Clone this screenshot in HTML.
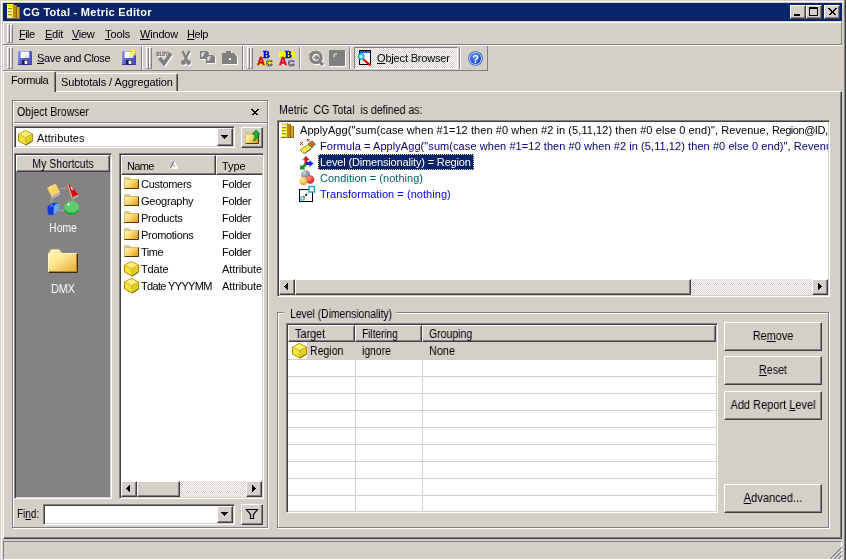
<!DOCTYPE html>
<html>
<head>
<meta charset="utf-8">
<title>CG Total - Metric Editor</title>
<style>
html,body{margin:0;padding:0;}
body{width:846px;height:560px;overflow:hidden;background:#d4d0c8;font-family:"Liberation Sans",sans-serif;font-size:11px;color:#000;position:relative;}
.a{position:absolute;white-space:nowrap;}
.t{position:absolute;white-space:nowrap;line-height:13px;height:13px;will-change:transform;}
u{text-decoration:underline;text-decoration-thickness:1px;text-underline-offset:1px;}
.btn{border:1px solid;border-color:#fff #404040 #404040 #fff;box-shadow:inset -1px -1px 0 #808080;background:#d4d0c8;box-sizing:border-box;}
.sunken{border:1px solid;border-color:#808080 #fff #fff #808080;box-shadow:inset 1px 1px 0 #404040, inset -1px -1px 0 #d4d0c8;background:#fff;box-sizing:border-box;}
.hdr{background:#d4d0c8;border:1px solid;border-color:#fff #404040 #404040 #fff;box-shadow:inset -1px -1px 0 #808080;box-sizing:border-box;}
.bar{width:3px;box-sizing:border-box;border-left:1px solid #fff;border-right:1px solid #808080;border-top:1px solid #fff;border-bottom:1px solid #808080;background:#d4d0c8;}
.sb{background-color:#e9e7e3;background-image:conic-gradient(#fff 25%,#d4d0c8 0 50%,#fff 0 75%,#d4d0c8 0);background-size:2px 2px;}
.etchv{width:0;border-left:1px solid #808080;border-right:1px solid #fff;}
.etchh{height:0;border-top:1px solid #808080;border-bottom:1px solid #fff;}
.etchbox{box-sizing:border-box;border:1px solid #808080;box-shadow:1px 1px 0 #fff, inset 1px 1px 0 #fff;}
svg{overflow:visible;will-change:transform;}
</style>
</head>
<body>
<div class="a " style="left:1px;top:1px;width:844px;height:559px;border-left:1px solid #fff;border-top:1px solid #fff;box-sizing:border-box;"></div>
<div class="a " style="left:844px;top:0px;width:1px;height:560px;background:#808080;"></div>
<div class="a " style="left:845px;top:0px;width:1px;height:560px;background:#404040;"></div>
<div class="a " style="left:3px;top:3px;width:839px;height:18px;background:#0a246a;"></div>
<svg class="a" style="left:7px;top:4px" width="14" height="16" viewBox="0 0 14 16" ><rect x="7" y="1" width="3" height="14" fill="#c08a00"/><rect x="10" y="3" width="2" height="12" fill="#d9a520"/><rect x="12" y="3" width="1" height="12" fill="#8a6a10"/>
<rect x="9" y="1" width="1" height="14" fill="#8a6400"/>
<rect x="0" y="0" width="7" height="15" fill="#ece23c"/><rect x="0" y="0" width="1" height="15" fill="#f8f4a0"/><rect x="6" y="0" width="1" height="15" fill="#a89a20"/>
<rect x="0" y="14" width="13" height="1" fill="#807830"/>
<rect x="1" y="3" width="4" height="1" fill="#fffbc8"/><rect x="1" y="6" width="3" height="1" fill="#fffbc8"/><rect x="1" y="9" width="4" height="1" fill="#fffbc8"/><rect x="1" y="12" width="3" height="1" fill="#fffbc8"/>
<rect x="1" y="4" width="4" height="1" fill="#a09020"/><rect x="1" y="7" width="3" height="1" fill="#a09020"/><rect x="1" y="10" width="4" height="1" fill="#a09020"/></svg>
<div class="t" id="t_title" style="left:23px;top:6px;letter-spacing:0.28px;color:#fff;font-weight:bold;">CG Total - Metric Editor</div>
<div class="a btn" style="left:790px;top:5px;width:16px;height:14px;"></div>
<div class="a btn" style="left:806px;top:5px;width:16px;height:14px;"></div>
<div class="a btn" style="left:824px;top:5px;width:16px;height:14px;"></div>
<div class="a " style="left:794px;top:14px;width:6px;height:2px;background:#000;"></div>
<div class="a " style="left:809px;top:7px;width:9px;height:9px;box-sizing:border-box;border:1px solid #000;border-top-width:2px;"></div>
<svg class="a" style="left:824px;top:5px" width="16" height="14" viewBox="0 0 16 14" ><path d="M4.5 3.5 L11.5 10.5 M5.5 3.5 L12.5 10.5 M11.5 3.5 L4.5 10.5 M12.5 3.5 L5.5 10.5" stroke="#000" stroke-width="1" fill="none" shape-rendering="crispEdges"/></svg>
<div class="a " style="left:3px;top:22px;width:839px;height:1px;background:#fff;"></div>
<div class="a " style="left:3px;top:22px;width:1px;height:23px;background:#fff;"></div>
<div class="a " style="left:841px;top:22px;width:1px;height:23px;background:#808080;"></div>
<div class="a etchh" style="left:3px;top:44px;width:839px;"></div>
<div class="a bar" style="left:7px;top:24px;height:19px;"></div>
<div class="a bar" style="left:10px;top:24px;height:19px;"></div>
<div class="t" id="t_m0" style="left:19px;top:28px;letter-spacing:-0.57px;"><u>F</u>ile</div>
<div class="t" id="t_m1" style="left:45px;top:28px;letter-spacing:-0.25px;"><u>E</u>dit</div>
<div class="t" id="t_m2" style="left:72px;top:28px;letter-spacing:-0.3px;"><u>V</u>iew</div>
<div class="t" id="t_m3" style="left:105px;top:28px;letter-spacing:-0.09px;"><u>T</u>ools</div>
<div class="t" id="t_m4" style="left:140px;top:28px;letter-spacing:-0.18px;"><u>W</u>indow</div>
<div class="t" id="t_m5" style="left:187px;top:28px;letter-spacing:-0.4px;"><u>H</u>elp</div>
<div class="a " style="left:3px;top:46px;width:1px;height:24px;background:#fff;"></div>
<div class="a " style="left:3px;top:70px;width:485px;height:1px;background:#808080;"></div>
<div class="a " style="left:487px;top:46px;width:1px;height:25px;background:#808080;"></div>
<div class="a bar" style="left:7px;top:47px;height:22px;"></div>
<div class="a bar" style="left:10px;top:47px;height:22px;"></div>
<svg class="a" style="left:18px;top:51px" width="14" height="14" viewBox="0 0 14 14" ><defs><linearGradient id="g1" x1="0" y1="0" x2="1" y2="0.3"><stop offset="0" stop-color="#9a98f4"/><stop offset="0.35" stop-color="#6a68e0"/><stop offset="1" stop-color="#4a4ac4"/></linearGradient></defs>
<path d="M0 0 H13 L14 1 V14 H0 Z" fill="url(#g1)"/>
<rect x="0" y="13" width="14" height="1" fill="#3a38a8"/>
<rect x="2.6" y="0.5" width="8.6" height="6.5" fill="#fafbff"/><rect x="7" y="4.5" width="4.2" height="2.5" fill="#dcdcf8"/>
<rect x="4" y="9" width="6" height="4.5" fill="#202048"/><rect x="6.6" y="9.6" width="2.8" height="3.4" fill="#f0f0fc"/></svg>
<div class="t" id="t_save" style="left:37px;top:52px;letter-spacing:-0.31px;"><u>S</u>ave and Close</div>
<svg class="a" style="left:122px;top:49px" width="16" height="16" viewBox="0 0 16 16" ><g transform="translate(0,2)"><defs><linearGradient id="g2" x1="0" y1="0" x2="1" y2="0.3"><stop offset="0" stop-color="#9a98f4"/><stop offset="0.35" stop-color="#6a68e0"/><stop offset="1" stop-color="#4a4ac4"/></linearGradient></defs>
<path d="M0 0 H13 L14 1 V13 H0 Z" fill="url(#g2)"/>
<rect x="0" y="13" width="14" height="1" fill="#3a38a8"/>
<rect x="2.6" y="0.5" width="8.6" height="6.5" fill="#fafbff"/><rect x="7" y="4.5" width="4.2" height="2.5" fill="#dcdcf8"/>
<rect x="4" y="9" width="6" height="4.5" fill="#202048"/><rect x="6.6" y="9.6" width="2.8" height="3.4" fill="#f0f0fc"/></g><g stroke="#ffe838" stroke-width="1.2"><path d="M11.5 0 V7 M8 3.5 H15 M9 1 L14 6 M14 1 L9 6"/></g><rect x="10.5" y="2.5" width="2" height="2" fill="#fffbd0"/></svg>
<div class="a etchv" style="left:141px;top:46px;height:24px;"></div>
<div class="a bar" style="left:146px;top:47px;height:22px;"></div>
<div class="a bar" style="left:149px;top:47px;height:22px;"></div>
<svg class="a" style="left:156px;top:51px" width="17" height="16" viewBox="0 0 17 16" ><g transform="translate(1,1)" fill="#fff" stroke="#fff"><path d="M3.5 7 L8 12.5 L15 2.5" fill="none" stroke-width="3.6"/><text x="0" y="4.5" font-family="Liberation Sans,sans-serif" font-size="7" font-weight="bold" stroke-width="0.4" letter-spacing="-0.3">sum</text></g><g fill="#808080" stroke="#808080"><path d="M3.5 7 L8 12.5 L15 2.5" fill="none" stroke-width="3.6"/><text x="0" y="4.5" font-family="Liberation Sans,sans-serif" font-size="7" font-weight="bold" stroke-width="0.4" letter-spacing="-0.3">sum</text></g></svg>
<svg class="a" style="left:181px;top:51px" width="11" height="15" viewBox="0 0 11 15" ><g transform="translate(1,1)" fill="#fff" stroke="#fff"><path d="M1.5 0 L6.5 10 M8.5 0 L3.5 10" fill="none" stroke-width="2.4"/><circle cx="2.5" cy="11.5" r="2.4" stroke="none"/><circle cx="7.5" cy="11.5" r="2.4" stroke="none"/></g><g fill="#808080" stroke="#808080"><path d="M1.5 0 L6.5 10 M8.5 0 L3.5 10" fill="none" stroke-width="2.4"/><circle cx="2.5" cy="11.5" r="2.4" stroke="none"/><circle cx="7.5" cy="11.5" r="2.4" stroke="none"/></g></svg>
<svg class="a" style="left:200px;top:51px" width="16" height="13" viewBox="0 0 16 13" ><g transform="translate(1,1)" fill="#fff"><path d="M0 0 H7 L9 2 V8 H0 Z" stroke="none"/><path d="M6 4 H13 L15 6 V12 H6 Z" stroke="none"/></g><g fill="#808080"><path d="M0 0 H7 L9 2 V8 H0 Z" stroke="none"/><path d="M6 4 H13 L15 6 V12 H6 Z" stroke="none"/></g><path d="M2 2 H5 M2 2 V6 M2 4 H4" stroke="#fff" fill="none"/><path d="M8 6 H11 M8 6 V10 M8 8 H10" stroke="#fff" fill="none"/></svg>
<svg class="a" style="left:222px;top:51px" width="16" height="14" viewBox="0 0 16 14" ><g transform="translate(1,1)" fill="#fff"><path d="M0 2 H4 V0 H9 V2 H12 L15 6 V13 H0 Z" stroke="none"/></g><g fill="#808080"><path d="M0 2 H4 V0 H9 V2 H12 L15 6 V13 H0 Z" stroke="none"/></g><rect x="7" y="7" width="2" height="2" fill="#fff"/></svg>
<div class="a etchv" style="left:242px;top:46px;height:24px;"></div>
<div class="a bar" style="left:247px;top:47px;height:22px;"></div>
<div class="a bar" style="left:250px;top:47px;height:22px;"></div>
<svg class="a" style="left:257px;top:49px" width="16" height="17" viewBox="0 0 16 17" ><rect x="0" y="13" width="10" height="3" fill="#ffff00"/><rect x="10" y="12" width="6" height="2" fill="#ffff00"/><text x="0" y="16" font-family="Liberation Sans,sans-serif" font-size="11" font-weight="bold" fill="#e00000" stroke="#e00000" stroke-width="0.4">A</text><text x="6" y="9" font-family="Liberation Serif,serif" font-size="10" font-weight="bold" fill="#0000d0" stroke="#0000d0" stroke-width="0.5">B</text><text x="9" y="17" font-family="Liberation Sans,sans-serif" font-size="9" font-weight="bold" fill="#fff" stroke="#303030" stroke-width="0.7">C</text></svg>
<svg class="a" style="left:279px;top:49px" width="16" height="17" viewBox="0 0 16 17" ><rect x="0" y="3" width="16" height="5" fill="#ffff00"/><text x="0" y="16" font-family="Liberation Sans,sans-serif" font-size="11" font-weight="bold" fill="#e00000" stroke="#e00000" stroke-width="0.4">A</text><text x="6" y="9" font-family="Liberation Serif,serif" font-size="10" font-weight="bold" fill="#0000d0" stroke="#0000d0" stroke-width="0.5">B</text><text x="9" y="17" font-family="Liberation Sans,sans-serif" font-size="9" font-weight="bold" fill="#fff" stroke="#303030" stroke-width="0.7">C</text></svg>
<div class="a etchv" style="left:299px;top:47px;height:22px;"></div>
<svg class="a" style="left:308px;top:50px" width="17" height="17" viewBox="0 0 17 17" ><g transform="translate(1,1)" fill="#fff" stroke="#fff"><circle cx="8" cy="7.5" r="5.2" fill="none" stroke-width="3"/><path d="M11.5 11.5 L15 15" fill="none" stroke-width="3"/><path d="M0.5 5 L5 1 L5.5 6 Z M15 9.5 L11 13 L10.5 8 Z" stroke="none"/></g><g fill="#808080" stroke="#808080"><circle cx="8" cy="7.5" r="5.2" fill="none" stroke-width="3"/><path d="M11.5 11.5 L15 15" fill="none" stroke-width="3"/><path d="M0.5 5 L5 1 L5.5 6 Z M15 9.5 L11 13 L10.5 8 Z" stroke="none"/></g><path d="M5.5 7.5 H10 L8 5.5 M10 7.5 L8 9.5" fill="none" stroke="#808080" stroke-width="1.4"/></svg>
<svg class="a" style="left:329px;top:50px" width="17" height="17" viewBox="0 0 17 17" ><rect x="1" y="1" width="16" height="16" fill="#fff"/><rect x="0" y="0" width="16" height="16" fill="#808080"/><path d="M5 7 V5.5 Q5 4 6.5 4 H8" stroke="#fff" fill="none"/></svg>
<div class="a etchv" style="left:349px;top:47px;height:22px;"></div>
<div class="a sb" style="left:354px;top:47px;width:104px;height:22px;box-sizing:border-box;border:1px solid;border-color:#808080 #fff #fff #808080;"></div>
<svg class="a" style="left:358px;top:50px" width="14" height="16" viewBox="0 0 14 16" ><rect x="1.5" y="0.5" width="11" height="14" fill="#fff" stroke="#000"/><rect x="2" y="1" width="10" height="2" fill="#2060e0"/><path d="M5 9 L12.5 15.5" stroke="#e00000" stroke-width="2"/><circle cx="3.2" cy="6.5" r="3" fill="#40e0e0" stroke="#00a0b0" stroke-width="1"/><circle cx="3.2" cy="6.5" r="1.2" fill="#c0ffff"/></svg>
<div class="t" id="t_ob1" style="left:377px;top:52px;letter-spacing:-0.17px;"><u>O</u>bject Browser</div>
<div class="a etchv" style="left:459px;top:47px;height:22px;"></div>
<svg class="a" style="left:468px;top:51px" width="15" height="15" viewBox="0 0 15 15" ><defs><radialGradient id="hg" cx="0.4" cy="0.3" r="0.8"><stop offset="0" stop-color="#5a8cf8"/><stop offset="1" stop-color="#0a30c0"/></radialGradient></defs><circle cx="7.5" cy="7.5" r="7.3" fill="#3060d8"/><circle cx="7.5" cy="7.5" r="6" fill="url(#hg)" stroke="#c8dcff" stroke-width="1"/><text x="7.5" y="11.5" text-anchor="middle" font-family="Liberation Sans,sans-serif" font-size="11" font-weight="bold" fill="#fff">?</text></svg>
<div class="a " style="left:3px;top:91px;width:839px;height:448px;box-sizing:border-box;border:1px solid;border-color:#fff #404040 #404040 #fff;box-shadow:inset -1px -1px 0 #808080;"></div>
<div class="a " style="left:55px;top:73px;width:123px;height:18px;box-sizing:border-box;border:1px solid;border-color:#fff #404040 #d4d0c8 #d4d0c8;border-bottom:none;box-shadow:inset -1px 0 0 #808080;border-radius:0 2px 0 0;"></div>
<div class="a " style="left:3px;top:71px;width:53px;height:21px;box-sizing:border-box;border:1px solid;border-color:#fff #404040 #d4d0c8 #fff;border-bottom:none;box-shadow:inset -1px 0 0 #808080;background:#d4d0c8;border-radius:2px 2px 0 0;"></div>
<div class="t" id="t_tab1" style="left:11px;top:74px;letter-spacing:-0.44px;">Formula</div>
<div class="t" id="t_tab2" style="left:61px;top:76px;letter-spacing:-0.08px;">Subtotals / Aggregation</div>
<div class="a etchbox" style="left:12px;top:100px;width:256px;height:428px;"></div>
<div class="t" id="t_ob2" style="left:17px;top:106px;font-size:12px;transform:scaleX(0.876);transform-origin:left top;">Object Browser</div>
<svg class="a" style="left:251px;top:109px" width="8" height="7" viewBox="0 0 8 7" ><path d="M0.5 0.5 L6.5 6.5 M1.5 0.5 L7.5 6.5 M6.5 0.5 L0.5 6.5 M7.5 0.5 L1.5 6.5" stroke="#000" stroke-width="1" fill="none" shape-rendering="crispEdges"/></svg>
<div class="a etchh" style="left:14px;top:122px;width:253px;"></div>
<div class="a sunken" style="left:14px;top:126px;width:221px;height:22px;"></div>
<svg class="a" style="left:18px;top:130px" width="16" height="16" viewBox="0 0 16 16" ><path d="M7.5 0.5 L14.5 4 V11 L8 15 L0.5 11 V4 Z" fill="#efe634" stroke="#b48a00" stroke-width="1" stroke-linejoin="round"/><path d="M7.5 1 L14 4 L7.5 7.5 L1 4 Z" fill="#f8f276"/><path d="M7.5 7.5 L14 4 V11 L8 14.5 Z" fill="#dcd21e"/><path d="M1 4 L7.5 7.5 L14 4 M7.5 7.5 L8 14.5" fill="none" stroke="#e0a848" stroke-width="0.9"/><path d="M8 15 L14.5 11" stroke="#6a5800" stroke-width="1"/></svg>
<div class="t" id="t_attr" style="left:37px;top:132px;letter-spacing:0.12px;">Attributes</div>
<div class="a btn" style="left:217px;top:128px;width:16px;height:18px;"></div>
<svg class="a" style="left:221px;top:135px" width="7" height="4" viewBox="0 0 7 4" ><path d="M0 0 H7 L3.5 4 Z" fill="#000" shape-rendering="crispEdges"/></svg>
<div class="a btn" style="left:241px;top:127px;width:22px;height:21px;"></div>
<svg class="a" style="left:245px;top:132px" width="14" height="12" viewBox="0 0 14 12" ><defs><linearGradient id="fg1" x1="0" y1="0.2" x2="1" y2="0.8"><stop offset="0" stop-color="#fff6b8"/><stop offset="0.4" stop-color="#fddc74"/><stop offset="1" stop-color="#dc9a14"/></linearGradient></defs><path d="M0.9333333333333333 0.5 H4.666666666666666 L6.066666666666666 1.8666666666666667 H0.5 V0.9333333333333333 Z" fill="#fdeea0" stroke="#c8b070" stroke-width="0.8"/><rect x="0" y="1.8666666666666667" width="14" height="10.133333333333333" fill="url(#fg1)"/><path d="M0.5 11 V2.3666666666666667 H13" fill="none" stroke="#d8bc70" stroke-width="1"/><path d="M0.5 11.5 H13.5 V2.3666666666666667" fill="none" stroke="#4a3808" stroke-width="1"/></svg>
<svg class="a" style="left:250px;top:130px" width="12" height="12" viewBox="0 0 12 12" ><path d="M6 0 L10 4 H8 Q8.5 10 3 11 Q5.5 8 4.5 4 H2 Z" fill="#18b030" stroke="#0a7018" stroke-width="0.6"/></svg>
<div class="a sunken" style="left:14px;top:153px;width:98px;height:346px;background:#848284;box-shadow:inset 1px 1px 0 #404040, inset -1px -1px 0 #d4d0c8;"></div>
<div class="a btn" style="left:16px;top:155px;width:94px;height:17px;"></div>
<div class="t" id="t_mysh" style="left:16px;top:158px;font-size:12px;transform:scaleX(0.876);transform-origin:center top;width:94px;text-align:center;">My Shortcuts</div>
<svg class="a" style="left:47px;top:183px" width="33" height="33" viewBox="0 0 33 33" ><g stroke="#9a9a9a" fill="#9a9a9a" stroke-width="1.2"><path d="M13 5.5 H18" fill="none"/><path d="M17 3.5 L20 5.5 L17 7.5 Z" stroke="none"/><path d="M4.5 13 V18" fill="none"/><path d="M2.5 17 L4.5 20 L6.5 17 Z" stroke="none"/><path d="M12 27.5 H16" fill="none"/><path d="M15 25.5 L18 27.5 L15 29.5 Z" stroke="none"/><path d="M25 14 V18" fill="none"/></g><path d="M0 5 L8.5 0.5 L13 9 L4.5 13.5 Z" fill="#fdd264"/><path d="M4.5 13.5 L13 9 L13.5 11.5 L5.5 16 Z" fill="#b4b4b4"/><path d="M2.5 5 L5 3.8" stroke="#fff" stroke-width="1"/><path d="M21 0.5 L31.5 11.5 L25.5 14.5 Z" fill="#e00808"/><path d="M21 0.5 L25.5 14.5 L24.3 14 L20.5 2 Z" fill="#e8b478"/><path d="M25 14.5 L31.5 11.5 L32 13 L26 16.5 Z" fill="#b0b0b0"/><path d="M24 4 L25.5 7" stroke="#fff" stroke-width="1.2"/><path d="M0.5 23.5 L6 20 H12 V26.5 L6.5 32 H2.5 Q0.5 31 0.5 29 Z" fill="#1038e0"/><path d="M6.5 32 L12.5 26.5 V20.5 Q9 19.5 6.8 23.2 Z" fill="#68a8e0"/><path d="M3.5 23.5 L5.8 22" stroke="#a8d0ff" stroke-width="1"/><path d="M21.5 18 H27.5 L31.8 22 V28 L27.5 32 H21.5 L17.5 28 V22 Z" fill="#5ccc68"/><path d="M17.5 27 L21.5 31 H27.5 L31.8 27 V28 L27.5 32 H21.5 L17.5 28 Z" fill="#2ca03c"/><path d="M21.5 29.5 H27.5 L31.8 26 V28 L27.5 32 H21.5 L17.5 28 V26 Z" fill="#2ca03c"/><path d="M20 21.5 H23 M21.5 20 V23" stroke="#d0ffd0" stroke-width="1"/></svg>
<div class="t" id="t_home" style="left:16px;top:222px;font-size:12px;transform:scaleX(0.87);transform-origin:center top;width:94px;text-align:center;color:#fff;">Home</div>
<svg class="a" style="left:48px;top:249px" width="30" height="24" viewBox="0 0 30 24" ><defs><linearGradient id="bfg" x1="0" y1="0" x2="1" y2="1"><stop offset="0" stop-color="#fff4b4"/><stop offset="0.4" stop-color="#fde48a"/><stop offset="1" stop-color="#e4a830"/></linearGradient></defs><path d="M1 4 L3 0.5 H11 L13.5 4 Z" fill="#fdf2b0" stroke="#e8d080" stroke-width="0.8"/><rect x="0" y="4" width="29" height="19.5" fill="url(#bfg)"/><path d="M0.5 23.5 V4.5 H28.5" stroke="#fff6c8" fill="none"/><path d="M0.5 23.5 H29.5 V5" fill="none" stroke="#3a2a08" stroke-width="1"/><path d="M1 22.5 H28.5 V5" fill="none" stroke="#b88420" stroke-width="1"/></svg>
<div class="t" id="t_dmx" style="left:16px;top:283px;font-size:12px;transform:scaleX(0.895);transform-origin:center top;width:94px;text-align:center;color:#fff;">DMX</div>
<div class="a sunken" style="left:119px;top:153px;width:145px;height:346px;"></div>
<div class="a hdr" style="left:121px;top:155px;width:95px;height:20px;"></div>
<div class="a " style="left:216px;top:155px;width:46px;height:20px;overflow:hidden;"><div class="hdr" style="width:80px;height:20px;"></div></div>
<div class="t" id="t_name" style="left:127px;top:160px;letter-spacing:-0.62px;">Name</div>
<svg class="a" style="left:170px;top:161px" width="9" height="8" viewBox="0 0 9 8" ><path d="M4 0.5 L7 6.8 H0.8" stroke="#fff" stroke-width="1.7" fill="none"/><path d="M0.5 7 L3.8 0.3" stroke="#808080" stroke-width="1.1" fill="none"/></svg>
<div class="t" id="t_type" style="left:222px;top:160px;letter-spacing:-0.1px;">Type</div>
<svg class="a" style="left:124px;top:177px" width="15" height="12" viewBox="0 0 15 12" ><defs><linearGradient id="fg2" x1="0" y1="0.2" x2="1" y2="0.8"><stop offset="0" stop-color="#fff6b8"/><stop offset="0.4" stop-color="#fddc74"/><stop offset="1" stop-color="#dc9a14"/></linearGradient></defs><path d="M1.0 0.5 H5.0 L6.5 2.0 H0.5 V1.0 Z" fill="#fdeea0" stroke="#c8b070" stroke-width="0.8"/><rect x="0" y="2.0" width="15" height="10.0" fill="url(#fg2)"/><path d="M0.5 11 V2.5 H14" fill="none" stroke="#d8bc70" stroke-width="1"/><path d="M0.5 11.5 H14.5 V2.5" fill="none" stroke="#4a3808" stroke-width="1"/></svg>
<div class="t" id="t_r0" style="left:141px;top:178px;letter-spacing:-0.3px;">Customers</div>
<div class="t" id="t_ty0" style="left:222px;top:178px;letter-spacing:-0.34px;width:40px;overflow:hidden;">Folder</div>
<svg class="a" style="left:124px;top:194px" width="15" height="12" viewBox="0 0 15 12" ><defs><linearGradient id="fg3" x1="0" y1="0.2" x2="1" y2="0.8"><stop offset="0" stop-color="#fff6b8"/><stop offset="0.4" stop-color="#fddc74"/><stop offset="1" stop-color="#dc9a14"/></linearGradient></defs><path d="M1.0 0.5 H5.0 L6.5 2.0 H0.5 V1.0 Z" fill="#fdeea0" stroke="#c8b070" stroke-width="0.8"/><rect x="0" y="2.0" width="15" height="10.0" fill="url(#fg3)"/><path d="M0.5 11 V2.5 H14" fill="none" stroke="#d8bc70" stroke-width="1"/><path d="M0.5 11.5 H14.5 V2.5" fill="none" stroke="#4a3808" stroke-width="1"/></svg>
<div class="t" id="t_r1" style="left:141px;top:195px;letter-spacing:-0.23px;">Geography</div>
<div class="t" id="t_ty1" style="left:222px;top:195px;letter-spacing:-0.34px;width:40px;overflow:hidden;">Folder</div>
<svg class="a" style="left:124px;top:211px" width="15" height="12" viewBox="0 0 15 12" ><defs><linearGradient id="fg4" x1="0" y1="0.2" x2="1" y2="0.8"><stop offset="0" stop-color="#fff6b8"/><stop offset="0.4" stop-color="#fddc74"/><stop offset="1" stop-color="#dc9a14"/></linearGradient></defs><path d="M1.0 0.5 H5.0 L6.5 2.0 H0.5 V1.0 Z" fill="#fdeea0" stroke="#c8b070" stroke-width="0.8"/><rect x="0" y="2.0" width="15" height="10.0" fill="url(#fg4)"/><path d="M0.5 11 V2.5 H14" fill="none" stroke="#d8bc70" stroke-width="1"/><path d="M0.5 11.5 H14.5 V2.5" fill="none" stroke="#4a3808" stroke-width="1"/></svg>
<div class="t" id="t_r2" style="left:141px;top:212px;letter-spacing:-0.24px;">Products</div>
<div class="t" id="t_ty2" style="left:222px;top:212px;letter-spacing:-0.34px;width:40px;overflow:hidden;">Folder</div>
<svg class="a" style="left:124px;top:228px" width="15" height="12" viewBox="0 0 15 12" ><defs><linearGradient id="fg5" x1="0" y1="0.2" x2="1" y2="0.8"><stop offset="0" stop-color="#fff6b8"/><stop offset="0.4" stop-color="#fddc74"/><stop offset="1" stop-color="#dc9a14"/></linearGradient></defs><path d="M1.0 0.5 H5.0 L6.5 2.0 H0.5 V1.0 Z" fill="#fdeea0" stroke="#c8b070" stroke-width="0.8"/><rect x="0" y="2.0" width="15" height="10.0" fill="url(#fg5)"/><path d="M0.5 11 V2.5 H14" fill="none" stroke="#d8bc70" stroke-width="1"/><path d="M0.5 11.5 H14.5 V2.5" fill="none" stroke="#4a3808" stroke-width="1"/></svg>
<div class="t" id="t_r3" style="left:141px;top:229px;letter-spacing:-0.31px;">Promotions</div>
<div class="t" id="t_ty3" style="left:222px;top:229px;letter-spacing:-0.34px;width:40px;overflow:hidden;">Folder</div>
<svg class="a" style="left:124px;top:245px" width="15" height="12" viewBox="0 0 15 12" ><defs><linearGradient id="fg6" x1="0" y1="0.2" x2="1" y2="0.8"><stop offset="0" stop-color="#fff6b8"/><stop offset="0.4" stop-color="#fddc74"/><stop offset="1" stop-color="#dc9a14"/></linearGradient></defs><path d="M1.0 0.5 H5.0 L6.5 2.0 H0.5 V1.0 Z" fill="#fdeea0" stroke="#c8b070" stroke-width="0.8"/><rect x="0" y="2.0" width="15" height="10.0" fill="url(#fg6)"/><path d="M0.5 11 V2.5 H14" fill="none" stroke="#d8bc70" stroke-width="1"/><path d="M0.5 11.5 H14.5 V2.5" fill="none" stroke="#4a3808" stroke-width="1"/></svg>
<div class="t" id="t_r4" style="left:141px;top:246px;letter-spacing:-0.45px;">Time</div>
<div class="t" id="t_ty4" style="left:222px;top:246px;letter-spacing:-0.34px;width:40px;overflow:hidden;">Folder</div>
<svg class="a" style="left:124px;top:261px" width="16" height="16" viewBox="0 0 16 16" ><path d="M7.5 0.5 L14.5 4 V11 L8 15 L0.5 11 V4 Z" fill="#efe634" stroke="#b48a00" stroke-width="1" stroke-linejoin="round"/><path d="M7.5 1 L14 4 L7.5 7.5 L1 4 Z" fill="#f8f276"/><path d="M7.5 7.5 L14 4 V11 L8 14.5 Z" fill="#dcd21e"/><path d="M1 4 L7.5 7.5 L14 4 M7.5 7.5 L8 14.5" fill="none" stroke="#e0a848" stroke-width="0.9"/><path d="M8 15 L14.5 11" stroke="#6a5800" stroke-width="1"/></svg>
<div class="t" id="t_r5" style="left:141px;top:263px;letter-spacing:-0.12px;">Tdate</div>
<div class="t" id="t_ty5" style="left:222px;top:263px;letter-spacing:-0.1px;width:40px;overflow:hidden;">Attribute</div>
<svg class="a" style="left:124px;top:278px" width="16" height="16" viewBox="0 0 16 16" ><path d="M7.5 0.5 L14.5 4 V11 L8 15 L0.5 11 V4 Z" fill="#efe634" stroke="#b48a00" stroke-width="1" stroke-linejoin="round"/><path d="M7.5 1 L14 4 L7.5 7.5 L1 4 Z" fill="#f8f276"/><path d="M7.5 7.5 L14 4 V11 L8 14.5 Z" fill="#dcd21e"/><path d="M1 4 L7.5 7.5 L14 4 M7.5 7.5 L8 14.5" fill="none" stroke="#e0a848" stroke-width="0.9"/><path d="M8 15 L14.5 11" stroke="#6a5800" stroke-width="1"/></svg>
<div class="t" id="t_r6" style="left:141px;top:280px;letter-spacing:-0.66px;">Tdate YYYYMM</div>
<div class="t" id="t_ty6" style="left:222px;top:280px;letter-spacing:-0.1px;width:40px;overflow:hidden;">Attribute</div>
<div class="a sb" style="left:121px;top:481px;width:141px;height:16px;"></div>
<div class="a btn" style="left:121px;top:481px;width:16px;height:16px;"></div>
<div class="a btn" style="left:137px;top:481px;width:43px;height:16px;"></div>
<div class="a btn" style="left:246px;top:481px;width:16px;height:16px;"></div>
<svg class="a" style="left:126px;top:485px" width="4" height="7" viewBox="0 0 4 7" ><path d="M4 0 V7 L0 3.5 Z" fill="#000" shape-rendering="crispEdges"/></svg>
<svg class="a" style="left:252px;top:485px" width="4" height="7" viewBox="0 0 4 7" ><path d="M0 0 V7 L4 3.5 Z" fill="#000" shape-rendering="crispEdges"/></svg>
<div class="t" id="t_find" style="left:17px;top:508px;font-size:12px;transform:scaleX(0.83);transform-origin:left top;">Fi<u>n</u>d:</div>
<div class="a sunken" style="left:43px;top:504px;width:192px;height:21px;"></div>
<div class="a btn" style="left:217px;top:506px;width:16px;height:17px;"></div>
<svg class="a" style="left:221px;top:512px" width="7" height="4" viewBox="0 0 7 4" ><path d="M0 0 H7 L3.5 4 Z" fill="#000" shape-rendering="crispEdges"/></svg>
<div class="a btn" style="left:241px;top:504px;width:22px;height:21px;"></div>
<svg class="a" style="left:246px;top:509px" width="13" height="10" viewBox="0 0 13 10" ><path d="M0.5 0.5 H11.5 L7.5 5.5 V9.5 H4.5 V5.5 Z" fill="#c8c8c8" stroke="#000" stroke-width="1.2" stroke-linejoin="miter"/></svg>
<div class="t" id="t_metric" style="left:279px;top:104px;font-size:12px;transform:scaleX(0.879);transform-origin:left top;">Metric&nbsp; CG Total&nbsp; is defined as:</div>
<div class="a sunken" style="left:277px;top:120px;width:553px;height:177px;"></div>
<div class="a" style="left:279px;top:122px;width:549px;height:157px;overflow:hidden;">
<svg class="a" style="left:2px;top:1px" width="14" height="16" viewBox="0 0 14 16" ><rect x="7" y="1" width="3" height="14" fill="#c08a00"/><rect x="10" y="3" width="2" height="12" fill="#d9a520"/><rect x="12" y="3" width="1" height="12" fill="#8a6a10"/>
<rect x="9" y="1" width="1" height="14" fill="#8a6400"/>
<rect x="0" y="0" width="7" height="15" fill="#ece23c"/><rect x="0" y="0" width="1" height="15" fill="#f8f4a0"/><rect x="6" y="0" width="1" height="15" fill="#a89a20"/>
<rect x="0" y="14" width="13" height="1" fill="#807830"/>
<rect x="1" y="3" width="4" height="1" fill="#fffbc8"/><rect x="1" y="6" width="3" height="1" fill="#fffbc8"/><rect x="1" y="9" width="4" height="1" fill="#fffbc8"/><rect x="1" y="12" width="3" height="1" fill="#fffbc8"/>
<rect x="1" y="4" width="4" height="1" fill="#a09020"/><rect x="1" y="7" width="3" height="1" fill="#a09020"/><rect x="1" y="10" width="4" height="1" fill="#a09020"/></svg>
<div class="t" id="t_tr0" style="left:21px;top:2px;letter-spacing:0.074px;">ApplyAgg("sum(case when #1=12 then #0 when #2 in (5,11,12) then #0 else 0 end)", Revenue, <span style="letter-spacing:-0.45px">Region@ID, Month</span>@ID)</div>
<svg class="a" style="left:21px;top:18px" width="16" height="15" viewBox="0 0 16 15" ><path d="M0 10 L9 4 L13 7 L4 14 Z" fill="#f2e83c" stroke="#8a8020" stroke-width="0.8"/><path d="M8 4 L12 1 L15.5 4 L12 7.5 Z" fill="#b07a30" stroke="#6a4810" stroke-width="0.8"/><path d="M4 10 L6 11.5 M7 8 L9 9.5" stroke="#fff" stroke-width="1"/><path d="M5 13 L11 9" stroke="#6a6010" stroke-width="1"/><path d="M0 2 L3 5 M3 2 L0 5 M7 -1 L9.5 1.5 M9.5 -1 L7 1.5" stroke="#e01010" stroke-width="1"/></svg>
<div class="t" id="t_tr1" style="left:41px;top:18px;letter-spacing:0.07px;color:#000080;">Formula = ApplyAgg("sum(case when #1=12 then #0 when #2 in (5,11,12) then #0 else 0 end)", Revenue, Region@ID, Month@ID)</div>
<div class="a " style="left:39px;top:32px;width:156px;height:16px;background:#0a246a;box-sizing:border-box;border:1px dotted #e8d890;"></div>
<svg class="a" style="left:21px;top:34px" width="14" height="14" viewBox="0 0 14 14" ><path d="M6 0 L9.5 4 H7.5 V9 H4.5 V4 H2.5 Z" fill="#e81010"/><path d="M6 0 L2.5 4 H4.5" fill="none" stroke="#40e0d0" stroke-width="0.8"/><path d="M13.5 7.5 L9.5 4 V6 H6 V9 H9.5 V11 Z" fill="#1020f0"/><path d="M9.5 4 L13.5 7.5" stroke="#60e0ff" stroke-width="0.8"/><path d="M0 13.5 L0.5 8.5 L2 10 L5 7 L7 9 L4 12 L5.5 13.5 Z" fill="#109020"/></svg>
<div class="t" id="t_tr2" style="left:41px;top:34px;letter-spacing:-0.155px;color:#fff;">Level (Dimensionality) = Region</div>
<svg class="a" style="left:20px;top:48px" width="16" height="16" viewBox="0 0 16 16" ><defs><radialGradient id="cg1" cx="0.35" cy="0.3" r="0.8"><stop offset="0" stop-color="#d0d8e0"/><stop offset="1" stop-color="#4a5c78"/></radialGradient><radialGradient id="cg2" cx="0.35" cy="0.3" r="0.8"><stop offset="0" stop-color="#ff9080"/><stop offset="1" stop-color="#c80000"/></radialGradient><radialGradient id="cg3" cx="0.35" cy="0.3" r="0.8"><stop offset="0" stop-color="#ffe8a0"/><stop offset="1" stop-color="#f09018"/></radialGradient></defs><circle cx="6.5" cy="4.8" r="4.6" fill="url(#cg1)"/><circle cx="11" cy="9.5" r="4.2" fill="url(#cg2)" opacity="0.95"/><circle cx="4.5" cy="11" r="4.2" fill="url(#cg3)" opacity="0.95"/></svg>
<div class="t" id="t_tr3" style="left:41px;top:50px;letter-spacing:0.03px;color:#006464;">Condition = (nothing)</div>
<svg class="a" style="left:20px;top:64px" width="16" height="16" viewBox="0 0 16 16" ><rect x="0.5" y="3.5" width="13" height="12" fill="#fff" stroke="#000"/><path d="M4 12 L9 7" stroke="#000" stroke-width="1.6" stroke-dasharray="2 1.4"/><rect x="10" y="0.5" width="5.5" height="5.5" fill="#fff" stroke="#10a8c8" stroke-width="1.4"/><rect x="2" y="11" width="3" height="3" fill="#fff" stroke="#10a8c8" stroke-width="1"/></svg>
<div class="t" id="t_tr4" style="left:41px;top:66px;letter-spacing:0.05px;color:#0000ff;">Transformation = (nothing)</div>
</div>
<div class="a sb" style="left:279px;top:279px;width:549px;height:16px;"></div>
<div class="a btn" style="left:279px;top:279px;width:16px;height:16px;"></div>
<div class="a btn" style="left:295px;top:279px;width:396px;height:16px;"></div>
<div class="a btn" style="left:812px;top:279px;width:16px;height:16px;"></div>
<svg class="a" style="left:284px;top:283px" width="4" height="7" viewBox="0 0 4 7" ><path d="M4 0 V7 L0 3.5 Z" fill="#000" shape-rendering="crispEdges"/></svg>
<svg class="a" style="left:818px;top:283px" width="4" height="7" viewBox="0 0 4 7" ><path d="M0 0 V7 L4 3.5 Z" fill="#000" shape-rendering="crispEdges"/></svg>
<div class="a etchbox" style="left:277px;top:312px;width:552px;height:216px;"></div>
<div class="t" id="t_grp" style="left:284px;top:308px;font-size:12px;transform:scaleX(0.864);transform-origin:left top;background:#d4d0c8;padding:0 5px 0 7px;">Level (Dimensionality)</div>
<div class="a sunken" style="left:286px;top:323px;width:432px;height:190px;"></div>
<div class="a " style="left:288px;top:342px;width:428px;height:169px;background:linear-gradient(#d4d0c8,#d4d0c8) 0 0/428px 18px no-repeat,linear-gradient(90deg,transparent 67px,#d4d0c8 67px,#d4d0c8 68px,transparent 68px,transparent 134px,#d4d0c8 134px,#d4d0c8 135px,transparent 135px),repeating-linear-gradient(#d4d0c8 0,#d4d0c8 1px,#fff 1px,#fff 17px) 0 0;"></div>
<div class="a " style="left:288px;top:342px;width:19px;height:17px;background:#fff;"></div>
<div class="a hdr" style="left:288px;top:325px;width:67px;height:17px;"></div>
<div class="a hdr" style="left:355px;top:325px;width:67px;height:17px;"></div>
<div class="a hdr" style="left:422px;top:325px;width:294px;height:17px;"></div>
<div class="t" id="t_h0" style="left:295px;top:328px;font-size:12px;transform:scaleX(0.904);transform-origin:left top;">Target</div>
<div class="t" id="t_h1" style="left:362px;top:328px;font-size:12px;transform:scaleX(0.838);transform-origin:left top;">Filtering</div>
<div class="t" id="t_h2" style="left:429px;top:328px;font-size:12px;transform:scaleX(0.874);transform-origin:left top;">Grouping</div>
<svg class="a" style="left:292px;top:343px" width="16" height="16" viewBox="0 0 16 16" ><path d="M7.5 0.5 L14.5 4 V11 L8 15 L0.5 11 V4 Z" fill="#efe634" stroke="#b48a00" stroke-width="1" stroke-linejoin="round"/><path d="M7.5 1 L14 4 L7.5 7.5 L1 4 Z" fill="#f8f276"/><path d="M7.5 7.5 L14 4 V11 L8 14.5 Z" fill="#dcd21e"/><path d="M1 4 L7.5 7.5 L14 4 M7.5 7.5 L8 14.5" fill="none" stroke="#e0a848" stroke-width="0.9"/><path d="M8 15 L14.5 11" stroke="#6a5800" stroke-width="1"/></svg>
<div class="t" id="t_g0" style="left:310px;top:345px;font-size:12px;transform:scaleX(0.879);transform-origin:left top;">Region</div>
<div class="t" id="t_g1" style="left:362px;top:345px;font-size:12px;transform:scaleX(0.862);transform-origin:left top;">ignore</div>
<div class="t" id="t_g2" style="left:429px;top:345px;font-size:12px;transform:scaleX(0.906);transform-origin:left top;">None</div>
<div class="a btn" style="left:724px;top:322px;width:98px;height:29px;box-shadow:inset -1px -1px 0 #808080;"></div>
<div class="t" id="t_b0" style="left:724px;top:330px;font-size:12px;transform:scaleX(0.906);transform-origin:center top;width:98px;text-align:center;">Re<u>m</u>ove</div>
<div class="a btn" style="left:724px;top:356px;width:98px;height:29px;box-shadow:inset -1px -1px 0 #808080;"></div>
<div class="t" id="t_b1" style="left:724px;top:364px;font-size:12px;transform:scaleX(0.892);transform-origin:center top;width:98px;text-align:center;"><u>R</u>eset</div>
<div class="a btn" style="left:724px;top:391px;width:98px;height:29px;box-shadow:inset -1px -1px 0 #808080;"></div>
<div class="t" id="t_b2" style="left:724px;top:399px;font-size:12px;transform:scaleX(0.918);transform-origin:center top;width:98px;text-align:center;">Add Report <u>L</u>evel</div>
<div class="a btn" style="left:724px;top:484px;width:98px;height:29px;box-shadow:inset -1px -1px 0 #808080;"></div>
<div class="t" id="t_b3" style="left:724px;top:492px;font-size:12px;transform:scaleX(0.923);transform-origin:center top;width:98px;text-align:center;"><u>A</u>dvanced...</div>
<div class="a " style="left:3px;top:541px;width:839px;height:19px;box-sizing:border-box;border:1px solid;border-color:#808080 #fff #fff #808080;"></div>
<svg class="a" style="left:829px;top:546px" width="13" height="13" viewBox="0 0 13 13" ><path d="M12.5 1 L1 12.5 M12.5 5 L5 12.5 M12.5 9 L9 12.5" stroke="#808080" stroke-width="2" fill="none"/><path d="M12.5 0 L0 12.5 M12.5 4 L4 12.5 M12.5 8 L8 12.5" stroke="#fff" stroke-width="1" fill="none"/></svg>
</body>
</html>
